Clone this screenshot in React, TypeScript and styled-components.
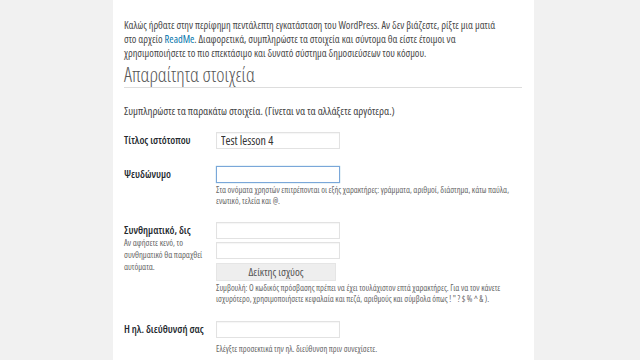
import styled, { createGlobalStyle } from "styled-components";

const GlobalStyle = createGlobalStyle`
  html, body {
    margin: 0;
    padding: 0;
    background: #f1f1f1;
  }
  body {
    font-family: "Open Sans", "Noto Sans", sans-serif;
    font-stretch: 75%;
    color: #444;
  }
  input {
    font-stretch: 75%;
  }
`;

const SCCard = styled.main`
  width: 421px;
  height: 360px;
  margin: 0 0 0 113px;
  background: #fff;
  box-sizing: border-box;
  padding: 18px 12px 0 11px;
  overflow: hidden;
`;

const SCIntro = styled.p`
  margin: 0;
  font-size: 10.4px;
  line-height: 14px;
  color: #4a4a4a;
  white-space: nowrap;

  a {
    color: #0073aa;
    text-decoration: none;
  }
`;

const SCHeading = styled.h1`
  margin: 4px 0 0;
  padding-bottom: 1px;
  font-size: 19.6px;
  line-height: 22px;
  font-weight: 300;
  color: #555;
  border-bottom: 1px solid #ddd;
`;

const SCSubtitle = styled.p`
  margin: 16px 0 0;
  font-size: 10.9px;
  line-height: 13px;
  color: #444;
`;

const SCRow = styled.div<{ $top: number }>`
  display: grid;
  grid-template-columns: 92px 124px;
  align-items: start;
  margin-top: ${(p) => p.$top}px;
`;

const SCLabel = styled.div`
  padding-top: 1px;
  font-size: 10.6px;
  line-height: 14px;
  font-weight: 600;
  color: #23282d;
`;

const SCLabelNote = styled.span`
  display: block;
  margin-top: 1px;
  font-size: 8.6px;
  line-height: 11px;
  font-weight: 400;
  color: #666;
`;

const SCField = styled.div`
  display: flex;
  flex-direction: column;
  width: 124px;
`;

const SCInput = styled.input<{ $focus?: boolean }>`
  box-sizing: border-box;
  width: 124px;
  height: 17px;
  margin: 0;
  padding: 0 4px;
  border: 1px solid ${(p) => (p.$focus ? "#7aa7d9" : "#e2e2e2")};
  box-shadow: ${(p) =>
    p.$focus ? "0 0 1px rgba(30,140,190,.6)" : "inset 0 1px 1px rgba(0,0,0,.04)"};
  font-family: "Open Sans", "Noto Sans", sans-serif;
  font-size: 12px;
  color: #333;
  background: #fff;
  outline: none;
  & + & {
    margin-top: 3px;
  }
`;

const SCStrength = styled.div`
  box-sizing: border-box;
  width: 120px;
  height: 18px;
  margin-top: 4px;
  background: #eee;
  border: 1px solid #e5e5e5;
  font-size: 11px;
  line-height: 16px;
  text-align: center;
  color: #555;
`;

const SCHint = styled.p<{ $gap?: number }>`
  margin: ${(p) => p.$gap ?? 0}px 0 0;
  width: 310px;
  font-size: 8.5px;
  line-height: 11px;
  color: #666;
  white-space: nowrap;
`;

export default function App() {
  return (
    <>
      <GlobalStyle />
      <SCCard>
        <SCIntro>
          Καλώς ήρθατε στην περίφημη πεντάλεπτη εγκατάσταση του WordPress. Αν δεν βιάζεστε, ρίξτε μια ματιά
          <br />
          στο αρχείο <a href="#">ReadMe</a>. Διαφορετικά, συμπληρώστε τα στοιχεία και σύντομα θα είστε έτοιμοι να
          <br />
          χρησιμοποιήσετε το πιο επεκτάσιμο και δυνατό σύστημα δημοσιεύσεων του κόσμου.
        </SCIntro>
        <SCHeading>Απαραίτητα στοιχεία</SCHeading>
        <SCSubtitle>Συμπληρώστε τα παρακάτω στοιχεία. (Γίνεται να τα αλλάξετε αργότερα.)</SCSubtitle>

        <SCRow $top={15}>
          <SCLabel>Τίτλος ιστότοπου</SCLabel>
          <SCField>
            <SCInput defaultValue="Test lesson 4" />
          </SCField>
        </SCRow>

        <SCRow $top={17}>
          <SCLabel>Ψευδώνυμο</SCLabel>
          <SCField>
            <SCInput $focus />
            <SCHint $gap={1}>
              Στα ονόματα χρηστών επιτρέπονται οι εξής χαρακτήρες: γράμματα, αριθμοί, διάστημα, κάτω παύλα,
              <br />
              ενωτικό, τελεία και @.
            </SCHint>
          </SCField>
        </SCRow>

        <SCRow $top={16}>
          <SCLabel>
            Συνθηματικό, δις
            <SCLabelNote>Αν αφήσετε κενό, το</SCLabelNote>
            <SCLabelNote>συνθηματικό θα παραχθεί</SCLabelNote>
            <SCLabelNote>αυτόματα.</SCLabelNote>
          </SCLabel>
          <SCField>
            <SCInput />
            <SCInput />
            <SCStrength>Δείκτης ισχύος</SCStrength>
            <SCHint $gap={1}>
              Συμβουλή: Ο κωδικός πρόσβασης πρέπει να έχει τουλάχιστον επτά χαρακτήρες. Για να τον κάνετε
              <br />
              ισχυρότερο, χρησιμοποιήσετε κεφαλαία και πεζά, αριθμούς και σύμβολα όπως ! " ? $ % ^ &amp; ).
            </SCHint>
          </SCField>
        </SCRow>

        <SCRow $top={17}>
          <SCLabel>Η ηλ. διεύθυνσή σας</SCLabel>
          <SCField>
            <SCInput />
            <SCHint $gap={5}>Ελέγξτε προσεκτικά την ηλ. διεύθυνση πριν συνεχίσετε.</SCHint>
          </SCField>
        </SCRow>
      </SCCard>
    </>
  );
}
